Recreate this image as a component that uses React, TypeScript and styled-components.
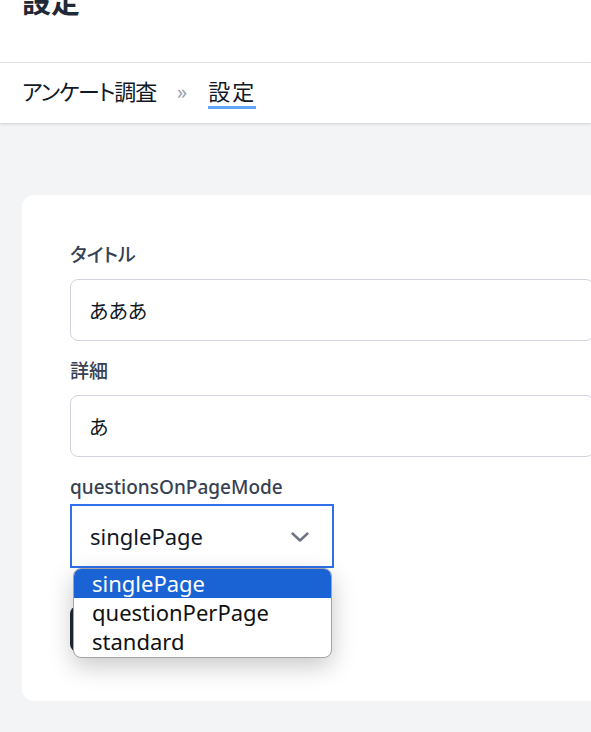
import { FC } from "react"
import { styled, createGlobalStyle } from "styled-components"

const GlobalStyle = createGlobalStyle`
  html, body {
    margin: 0;
    padding: 0;
    background: #f3f4f6;
    overflow: hidden;
  }
  body {
    font-family: "Noto Sans", "Noto Sans CJK JP", sans-serif;
    font-feature-settings: "palt";
    color: #111827;
  }
  * {
    box-sizing: border-box;
  }
`

const options = ["singlePage", "questionPerPage", "standard"]

const App: FC = (): JSX.Element => {
  return (
    <Page>
      <GlobalStyle />
      <Header>
        <h1>設定</h1>
      </Header>

      <Breadcrumb>
        <span>アンケート調査</span>
        <span className="sep">»</span>
        <span className="current">設定</span>
      </Breadcrumb>

      <Main>
        <Card>
          <Field>
            <Label>タイトル</Label>
            <TextInput>あああ</TextInput>
          </Field>

          <Field>
            <Label>詳細</Label>
            <TextInput>あ</TextInput>
          </Field>

          <Field $tight>
            <Label>questionsOnPageMode</Label>
            <SelectWrap>
              <SelectBox>
                <span>singlePage</span>
                <svg width="20" height="12" viewBox="0 0 20 12" fill="none">
                  <path d="M2.5 2.5 10 9.5l7.5-7" stroke="#6b7280" strokeWidth="2.4" strokeLinecap="round" strokeLinejoin="round" />
                </svg>
              </SelectBox>

              <OptionList>
                {options.map((o, i) => (
                  <OptionItem key={o} $active={i === 0}>
                    {o}
                  </OptionItem>
                ))}
              </OptionList>
            </SelectWrap>
          </Field>

          <SaveButton>保存</SaveButton>
        </Card>
      </Main>
    </Page>
  )
}

const Page = styled.div`
  margin-top: -40px;
  min-height: 800px;
`

const Header = styled.header`
  height: 103px;
  padding: 24px 22px 0;
  background: #fff;
  border-bottom: 1px solid #e5e7eb;

  > h1 {
    margin: 0;
    font-size: 29px;
    line-height: 36px;
    font-weight: 700;
    color: #1f2937;
  }
`

const Breadcrumb = styled.nav`
  position: relative;
  height: 60px;
  padding: 13px 22px 0;
  display: flex;
  align-items: flex-start;
  gap: 21px;
  background: #fff;
  font-size: 22px;
  line-height: 30px;
  color: #111827;
  box-shadow: 0 1px 3px rgba(0, 0, 0, 0.1), 0 1px 2px rgba(0, 0, 0, 0.06);

  > span:first-child {
    letter-spacing: -1.2px;
  }

  > span.sep {
    color: #9ca3af;
    font-size: 20px;
    line-height: 32px;
  }

  > span.current {
    letter-spacing: 2px;
    border-bottom: 3px solid #60a5fa;
  }
`

const Main = styled.main`
  padding: 72px 0 0 22px;
`

const Card = styled.section`
  width: 620px;
  padding: 48px 48px 49px;
  background: #fff;
  border-radius: 12px;
`

const Field = styled.div<{ $tight?: boolean }>`
  margin-bottom: ${({ $tight }) => ($tight ? "0" : "18px")};

  > label {
    margin-bottom: ${({ $tight }) => ($tight ? "5px" : "12px")};
  }
`

const Label = styled.label`
  display: block;
  font-size: 19px;
  line-height: 24px;
  font-weight: 500;
  color: #374151;
`

const TextInput = styled.div`
  height: 62px;
  padding: 0 18px;
  display: flex;
  align-items: center;
  font-size: 20px;
  color: #111827;
  border: 1px solid #d1d5db;
  border-radius: 8px;
  background: #fff;
`

const SelectWrap = styled.div`
  position: relative;
  width: 264px;
`

const SelectBox = styled.div`
  height: 64px;
  padding: 0 22px 0 18px;
  display: flex;
  align-items: center;
  justify-content: space-between;
  font-size: 22px;
  color: #111827;
  border: 2px solid #2f6fea;
  background: #fff;

  > svg {
    margin-top: 2px;
  }
`

const OptionList = styled.ul`
  position: absolute;
  top: 64px;
  left: 3px;
  width: 259px;
  margin: 0;
  padding: 0 0 1px;
  list-style: none;
  background: #fff;
  border: 1px solid #a3a3a3;
  border-radius: 8px;
  overflow: hidden;
  z-index: 2;
  box-shadow: 0 8px 24px rgba(0, 0, 0, 0.22);
`

const OptionItem = styled.li<{ $active?: boolean }>`
  height: 29px;
  padding-left: 18px;
  font-size: 22px;
  line-height: 29px;
  color: ${({ $active }) => ($active ? "#fff" : "#111")};
  background: ${({ $active }) => ($active ? "#1a63d4" : "transparent")};
`

const SaveButton = styled.button`
  display: block;
  margin-top: 38px;
  height: 46px;
  padding: 0 28px;
  font-family: inherit;
  font-size: 18px;
  color: #fff;
  background: #1f2937;
  border: none;
  border-radius: 8px;
`

export default App
